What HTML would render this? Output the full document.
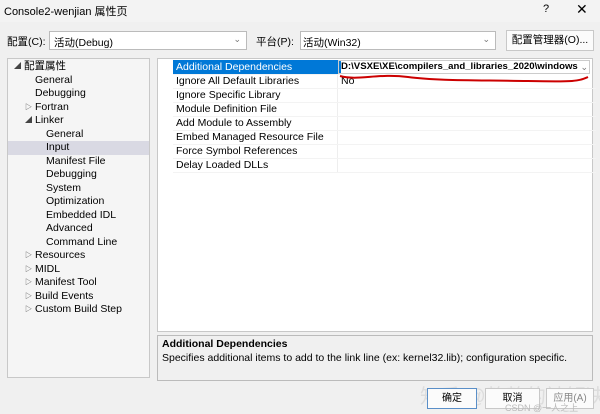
<html><head><style>
body{margin:0;width:600px;height:414px;background:#f0f0f0;font-family:"Liberation Sans","Noto Sans CJK SC",sans-serif;font-size:10.5px;color:#000;position:relative;overflow:hidden}
.a{position:absolute;white-space:nowrap}
.box{position:absolute;border:1px solid #c8c8c8;background:#fff;box-sizing:border-box}
.t{position:absolute;left:0;white-space:nowrap;line-height:13.5px}
.tr{position:absolute;left:-10px;font-size:7px;color:#444}
.row{position:absolute;left:15px;width:420px;height:14px;line-height:14px;border-bottom:1px solid #f3f3f3}
.btn{position:absolute;border:1px solid #c8c8c8;background:#fbfbfb;box-sizing:border-box;text-align:center;font-size:10px}
</style></head><body>
<div class="a" style="left:0;top:0;width:600px;height:22px;background:#f3f3f3"></div>
<div class="a" style="left:4px;top:3px;font-size:11px">Console2-wenjian 属性页</div>
<div class="a" style="left:543px;top:3px;font-size:11px">?</div>
<div class="a" style="left:576px;top:1px;font-size:14px">✕</div>
<div class="a" style="left:7px;top:34px">配置(C):</div>
<div class="box" style="left:49px;top:31px;width:198px;height:19px;border-color:#bbb"><span class="a" style="left:4px;top:3px">活动(Debug)</span><span class="a" style="right:5px;top:2px;color:#777;font-size:9px">⌄</span></div>
<div class="a" style="left:256px;top:34px">平台(P):</div>
<div class="box" style="left:300px;top:31px;width:196px;height:19px;border-color:#bbb"><span class="a" style="left:2px;top:3px">活动(Win32)</span><span class="a" style="right:5px;top:2px;color:#777;font-size:9px">⌄</span></div>
<div class="btn" style="left:506px;top:30px;width:88px;height:21px;line-height:19px;font-size:10.5px">配置管理器(O)...</div>

<div class="box" style="left:7px;top:58px;width:143px;height:320px;background:#f5f5f5">
<div style="position:absolute;left:0;top:1px">
<div class="t" style="top:0;left:16px"><span class="tr">◢</span>配置属性</div>
<div class="t" style="top:13.5px;left:27px">General</div>
<div class="t" style="top:27px;left:27px">Debugging</div>
<div class="t" style="top:40.5px;left:27px"><span class="tr">▷</span>Fortran</div>
<div class="t" style="top:54px;left:27px"><span class="tr">◢</span>Linker</div>
<div class="t" style="top:67.5px;left:38px">General</div>
<div class="t" style="top:81px;left:0;width:141px;height:13.5px;background:#d9d9e3"></div>
<div class="t" style="top:81px;left:38px">Input</div>
<div class="t" style="top:94.5px;left:38px">Manifest File</div>
<div class="t" style="top:108px;left:38px">Debugging</div>
<div class="t" style="top:121.5px;left:38px">System</div>
<div class="t" style="top:135px;left:38px">Optimization</div>
<div class="t" style="top:148.5px;left:38px">Embedded IDL</div>
<div class="t" style="top:162px;left:38px">Advanced</div>
<div class="t" style="top:175.5px;left:38px">Command Line</div>
<div class="t" style="top:189px;left:27px"><span class="tr">▷</span>Resources</div>
<div class="t" style="top:202.5px;left:27px"><span class="tr">▷</span>MIDL</div>
<div class="t" style="top:216px;left:27px"><span class="tr">▷</span>Manifest Tool</div>
<div class="t" style="top:229.5px;left:27px"><span class="tr">▷</span>Build Events</div>
<div class="t" style="top:243px;left:27px"><span class="tr">▷</span>Custom Build Step</div>
</div></div>

<div class="box" style="left:157px;top:58px;width:436px;height:274px">
<div class="a" style="left:179px;top:1px;width:1px;height:112px;background:#eee"></div>
<div class="row" style="top:1px;left:15px;width:165px;background:#0078d7;color:#fff;padding-left:3px">Additional Dependencies</div>
<div class="row" style="top:1px;left:180px;width:252px;font-weight:bold;font-size:9.6px;border:1px solid #ccc;box-sizing:border-box;padding-left:2px;line-height:12px">D:\VSXE\XE\compilers_and_libraries_2020\windows<span class="a" style="right:1px;top:0;font-weight:normal;color:#777;font-size:9px">⌄</span></div>
<div class="row" style="top:15px;padding-left:3px">Ignore All Default Libraries<span class="a" style="left:168px">No</span></div>
<div class="row" style="top:29px;padding-left:3px">Ignore Specific Library</div>
<div class="row" style="top:43px;padding-left:3px">Module Definition File</div>
<div class="row" style="top:57px;padding-left:3px">Add Module to Assembly</div>
<div class="row" style="top:71px;padding-left:3px">Embed Managed Resource File</div>
<div class="row" style="top:85px;padding-left:3px">Force Symbol References</div>
<div class="row" style="top:99px;padding-left:3px">Delay Loaded DLLs</div>
<svg class="a" style="left:180px;top:12px" width="256" height="16"><path d="M2 5 C20 10 40 2 70 6 S140 9 190 10 S240 10 250 6" stroke="#c00" stroke-width="2" fill="none"/></svg>
</div>

<div class="box" style="left:157px;top:335px;width:436px;height:46px;background:#f0f0f0;border-color:#bbb">
<div class="a" style="left:4px;top:2px;font-weight:bold">Additional Dependencies</div>
<div class="a" style="left:4px;top:16px">Specifies additional items to add to the link line (ex: kernel32.lib); configuration specific.</div>
</div>
<div class="a" style="left:420px;top:380px;font-size:20px;color:#ddd">知乎 @静静的被解决</div>
<div class="btn" style="left:427px;top:388px;width:50px;height:21px;line-height:19px;border-color:#5a8fc8">确定</div>
<div class="btn" style="left:485px;top:388px;width:55px;height:21px;line-height:19px">取消</div>
<div class="btn" style="left:546px;top:388px;width:48px;height:21px;line-height:19px;color:#888">应用(A)</div>
<div class="a" style="left:505px;top:401px;font-size:9px;color:#bbb">CSDN @一人之上</div>
</body></html>
